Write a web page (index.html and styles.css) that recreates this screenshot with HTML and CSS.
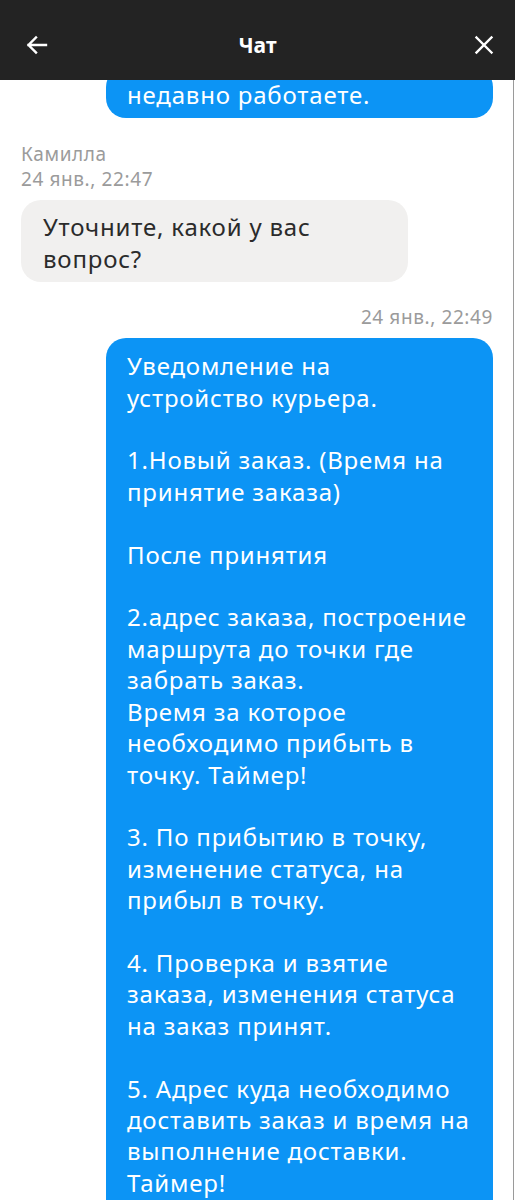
FILE: index.html
```html
<!DOCTYPE html>
<html lang="ru">
<head>
<meta charset="utf-8">
<title>Чат</title>
<link rel="stylesheet" href="styles.css">
</head>
<body>
<div class="screen">
  <header class="topbar">
    <button class="icon-btn" aria-label="Назад">
      <svg width="24" height="24" viewBox="0 0 24 24"><path d="M21 12H3.5M11 4.5L3.5 12L11 19.5" fill="none" stroke="#fff" stroke-width="2.4" stroke-linecap="square"/></svg>
    </button>
    <h1 class="title">Чат</h1>
    <button class="icon-btn" aria-label="Закрыть">
      <svg width="24" height="24" viewBox="0 0 24 24"><path d="M4.5 4.5L19.5 19.5M19.5 4.5L4.5 19.5" fill="none" stroke="#fff" stroke-width="2.4" stroke-linecap="square"/></svg>
    </button>
  </header>
  <main class="chat">
    <div class="feed">
      <div class="msg out first">
        <div class="bubble blue">недавно работаете.</div>
      </div>
      <div class="msg in">
        <div class="meta">Камилла<br>24 янв., 22:47</div>
        <div class="bubble grey">Уточните, какой у вас
вопрос?</div>
      </div>
      <div class="msg out">
        <div class="meta right">24 янв., 22:49</div>
        <div class="bubble blue long">Уведомление на
устройство курьера.

1.Новый заказ. (Время на
принятие заказа)

После принятия

2.адрес заказа, построение
маршрута до точки где
забрать заказ.
Время за которое
необходимо прибыть в
точку. Таймер!

3. По прибытию в точку,
изменение статуса, на
прибыл в точку.

4. Проверка и взятие
заказа, изменения статуса
на заказ принят.

5. Адрес куда необходимо
доставить заказ и время на
выполнение доставки.
Таймер!</div>
      </div>
    </div>
  </main>
</div>
</body>
</html>
```

FILE: styles.css
```css
* { box-sizing: border-box; }
html, body { margin: 0; padding: 0; background: #fff; }
body { font-family: "Noto Sans", "Open Sans", sans-serif; }
.screen { width: 515px; height: 1200px; overflow: hidden; display: flex; flex-direction: column; }
.topbar {
  height: 80px; flex: none; background: #232323;
  display: flex; align-items: center; justify-content: space-between;
  padding: 10px 19px 0 25px; position: relative; z-index: 2;
}
.icon-btn { background: none; border: 0; padding: 0; width: 24px; height: 24px; display: flex; }
.title {
  margin: 0; color: #fff; font-size: 21px; font-weight: 700;
  position: absolute; left: 0; right: 0; top: 10px; text-align: center; pointer-events: none;
  line-height: 70px;
}
.chat {
  flex: 1; overflow: hidden; width: 514px;
  border-right: 1px solid #9a9a9a;
}
.feed { display: flex; flex-direction: column; margin-top: -13px; }
.msg { display: flex; flex-direction: column; padding: 0 20px 0 21px; }
.msg.out { align-items: flex-end; }
.msg.in { align-items: flex-start; margin-top: 24px; }
.msg.out:not(.first) { margin-top: 23px; }
.meta { color: #9b9b9b; font-size: 19px; letter-spacing: 0.6px; line-height: 25px; margin-bottom: 8px; }
.meta.right { text-align: right; }
.bubble {
  width: 387px; font-size: 24px; letter-spacing: 0.8px; line-height: 31.4px;
  white-space: pre-line; border-radius: 20px;
  padding: 12px 10px 8px 21px;
}
.bubble.blue { background: #0c94f5; color: #fff; }
.bubble.long { padding-bottom: 40px; }
.bubble.grey { background: #f1f0ef; color: #2b2b2b; padding: 11px 10px 8px 22px; }
```
